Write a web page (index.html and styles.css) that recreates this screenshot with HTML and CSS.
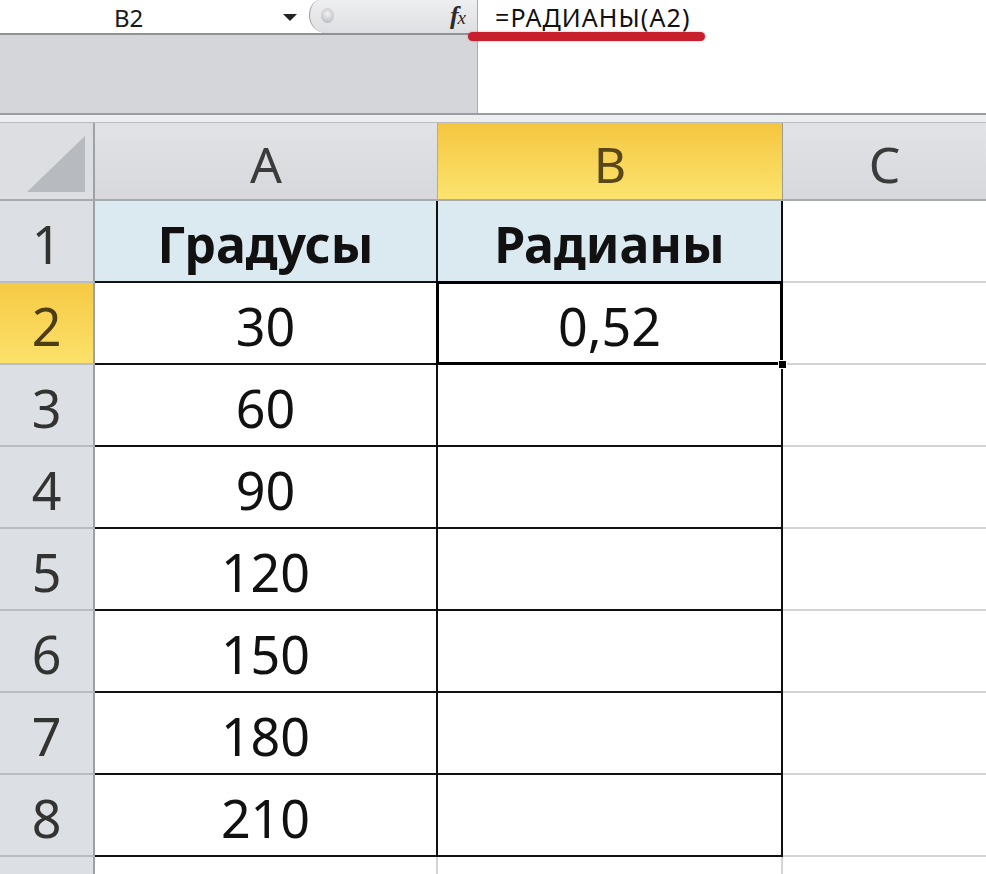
FILE: index.html
```html
<!DOCTYPE html>
<html lang="ru">
<head>
<meta charset="utf-8">
<title>РАДИАНЫ</title>
<link rel="stylesheet" href="styles.css">
</head>
<body>
<div class="app">
  <div class="fbar">
    <div class="fbar-left">
      <div class="name-row">
        <div class="namebox"><span class="cellref">B2</span><span class="caret"></span></div>
        <div class="pill"><span class="knob"></span><span class="fx">f<span class="fx-x">x</span></span></div>
      </div>
      <div class="fbar-fill"></div>
    </div>
    <div class="fbar-input"><span class="formula">=РАДИАНЫ(A2)</span></div>
    <div class="mark"></div>
  </div>
  <div class="band"></div>
  <div class="sheet">
    <div class="corner"><svg class="corner-tri" width="95" height="77" viewBox="0 0 95 77"><polygon points="27,69 85,69 85,13" fill="#b7babe"/></svg></div>
    <div class="colhead">A</div>
    <div class="colhead sel">B</div>
    <div class="colhead last">C</div>

    <div class="rowhead">1</div>
    <div class="cell t ta hdr">Градусы</div>
    <div class="cell t tb hdr">Радианы</div>
    <div class="cell"></div>

    <div class="rowhead sel">2</div>
    <div class="cell t ta">30</div>
    <div class="cell t tb active">0,52</div>
    <div class="cell"></div>

    <div class="rowhead">3</div>
    <div class="cell t ta">60</div>
    <div class="cell t tb"></div>
    <div class="cell"></div>

    <div class="rowhead">4</div>
    <div class="cell t ta">90</div>
    <div class="cell t tb"></div>
    <div class="cell"></div>

    <div class="rowhead">5</div>
    <div class="cell t ta">120</div>
    <div class="cell t tb"></div>
    <div class="cell"></div>

    <div class="rowhead">6</div>
    <div class="cell t ta">150</div>
    <div class="cell t tb"></div>
    <div class="cell"></div>

    <div class="rowhead">7</div>
    <div class="cell t ta">180</div>
    <div class="cell t tb"></div>
    <div class="cell"></div>

    <div class="rowhead">8</div>
    <div class="cell t ta">210</div>
    <div class="cell t tb"></div>
    <div class="cell"></div>

    <div class="rowhead"></div>
    <div class="cell g ga"></div>
    <div class="cell g gb"></div>
    <div class="cell"></div>
  </div>
</div>
</body>
</html>
```
FILE: styles.css
```css
html, body {
  margin: 0;
  padding: 0;
  background: #ffffff;
}
body {
  width: 986px;
  height: 874px;
  overflow: hidden;
  font-family: "Noto Sans", "Open Sans", sans-serif;
  color: #111;
}
.app {
  width: 986px;
  height: 874px;
  overflow: hidden;
  display: flex;
  flex-direction: column;
}

/* formula bar */
.fbar {
  position: relative;
  display: flex;
  height: 113px;
  border-bottom: 2px solid #9a9ca0;
  flex: none;
}
.fbar-left {
  width: 477px;
  display: flex;
  flex-direction: column;
  border-right: 1px solid #a9abae;
}
.name-row {
  display: flex;
  height: 33px;
  border-bottom: 2px solid #8f9296;
  flex: none;
}
.namebox {
  width: 309px;
  display: flex;
  align-items: center;
  background: #ffffff;
  padding-left: 114px;
  box-sizing: border-box;
}
.cellref {
  font-size: 24px;
  line-height: 33px;
  color: #1a1a1a;
  padding-top: 1px;
}
.caret {
  margin-left: auto;
  margin-right: 12px;
  width: 0;
  height: 0;
  border-left: 7px solid transparent;
  border-right: 7px solid transparent;
  border-top: 7px solid #222;
  margin-top: 2px;
}
.pill {
  flex: 1;
  display: flex;
  align-items: center;
  background: linear-gradient(#eeeff0, #dedfe2);
  border-left: 1px solid #9c9ea2;
  border-radius: 14px 0 0 22px / 20px 0 0 22px;
  padding-left: 11px;
  padding-right: 12px;
}
.knob {
  width: 13px;
  height: 15px;
  border-radius: 50%;
  background: radial-gradient(circle at 50% 40%, #f2f2f2 0%, #c9cacd 60%, #a9abae 100%);
  margin-top: -3px;
}
.fx {
  margin-left: auto;
  font-family: "Liberation Serif", serif;
  font-style: italic;
  font-weight: bold;
  font-size: 26px;
  line-height: 30px;
  color: #2b2b2b;
  letter-spacing: -1px;
}
.fx-x {
  font-size: 19px;
  font-weight: normal;
}
.fbar-fill {
  flex: 1;
  background: #d5d6d9;
}
.fbar-input {
  flex: 1;
  background: #ffffff;
  padding-left: 17px;
}
.formula {
  display: block;
  font-size: 25px;
  line-height: 33px;
  padding-top: 1px;
  letter-spacing: 1.1px;
  color: #111;
}
.mark {
  position: absolute;
  left: 468px;
  top: 32px;
  width: 237px;
  height: 9px;
  border-radius: 5px;
  background: #c81f2d;
  box-shadow: 0 0 2px rgba(200, 31, 45, 0.5);
}
.band {
  flex: none;
  height: 7px;
  background: #eceef0;
  border-bottom: 1px solid #b9bbbe;
}

/* sheet grid */
.sheet {
  flex: 1;
  display: grid;
  grid-template-columns: 95px 343px 345px 1fr;
  grid-template-rows: 78px;
  grid-auto-rows: 82px;
  overflow: hidden;
}
.sheet > div {
  box-sizing: border-box;
  display: flex;
  align-items: center;
  justify-content: center;
  padding-top: 5px;
}
.corner {
  background: #dcdee1;
  border-right: 2px solid #9ea2a7;
  border-bottom: 2px solid #a7aaae;
  position: relative;
}
.sheet > .corner {
  padding: 0;
}
.corner-tri {
  position: absolute;
  left: 0;
  top: 0;
}
.colhead {
  background: linear-gradient(#e1e3e6, #d6d8dc);
  border-right: 1px solid #a9acb0;
  border-bottom: 2px solid #a7aaae;
  font-size: 50px;
  color: #3b3b3b;
}
.colhead.sel {
  background: linear-gradient(#f5c640, #fbe46e);
  color: #5a4718;
  border-right: 1px solid #9f9c90;
}
.colhead.last {
  border-right: none;
}
.rowhead {
  background: #dcdfe3;
  border-right: 2px solid #9ea2a7;
  border-bottom: 2px solid #b9bcc0;
  font-size: 52px;
  color: #333;
}
.rowhead.sel {
  background: linear-gradient(#f6ca45, #fbe16a);
  color: #4d3d14;
}
.cell {
  background: #ffffff;
  border-bottom: 2px solid #d4d4d4;
  font-size: 52px;
  color: #111;
}
.cell.t {
  border-bottom: 2px solid #111;
}
.cell.ta, .cell.tb {
  border-right: 2px solid #111;
}
.cell.ga, .cell.gb {
  border-right: 2px solid #d4d4d4;
}
.cell.g {
  border-bottom: none;
}
.cell.hdr {
  background: #dbeaf1;
  font-weight: 700;
  font-size: 50px;
}
.cell.active {
  position: relative;
}
.cell.active::after {
  content: "";
  position: absolute;
  left: -2px;
  top: -2px;
  right: -2px;
  bottom: -2px;
  border: 3px solid #000;
  pointer-events: none;
}
.cell.active::before {
  content: "";
  position: absolute;
  right: -6px;
  bottom: -6px;
  width: 7px;
  height: 7px;
  background: #000;
  border: 1px solid #fff;
  z-index: 2;
}
```
